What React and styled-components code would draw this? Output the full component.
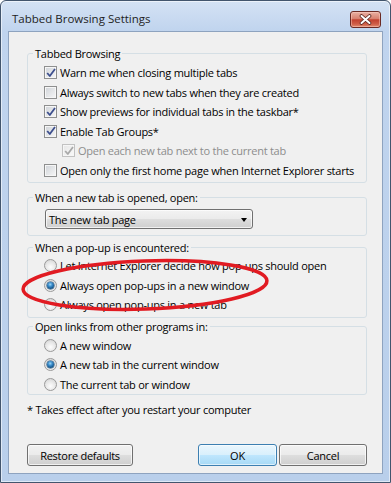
import React from 'react';
import styled, { createGlobalStyle } from 'styled-components';

const GlobalStyle = createGlobalStyle`
  html, body {
    margin: 0;
    padding: 0;
    background: #ffffff;
  }
  * {
    box-sizing: border-box;
  }
`;

const Window = styled.div`
  position: relative;
  width: 391px;
  height: 483px;
  display: flex;
  flex-direction: column;
  padding: 0 7px 8px 7px;
  border: 1px solid #42556d;
  border-radius: 6px 6px 0 0;
  background: linear-gradient(to bottom, #d4e2f4 0px, #c0d4ee 30px, #b9cfeb 100%);
  box-shadow: inset 0 0 0 1px rgba(255, 255, 255, 0.55);
  font-family: "Open Sans", "Noto Sans", sans-serif;
  font-size: 11px;
  letter-spacing: -0.25px;
  color: #000000;
`;

const TitleBar = styled.div`
  height: 30px;
  display: flex;
  justify-content: space-between;
  align-items: flex-start;
  flex: none;
`;

const Title = styled.div`
  padding: 10px 0 0 4px;
  font-size: 11.5px;
  letter-spacing: 0;
  line-height: 16px;
  color: #1e1e1e;
`;

const CloseButton = styled.div`
  width: 31px;
  height: 17px;
  margin: 10px 2px 0 0;
  display: flex;
  align-items: center;
  justify-content: center;
  border: 1px solid #6b2a24;
  border-radius: 3px;
  background: linear-gradient(to bottom, #e9b1a4 0%, #d8806f 45%, #c2412f 52%, #cf5d47 80%, #e18c70 100%);
  box-shadow: inset 0 0 0 1px rgba(255, 210, 200, 0.45);
`;

const Content = styled.div`
  flex: 1;
  display: flex;
  flex-direction: column;
  padding: 14px 15px 0 18px;
  border: 1px solid #8ea3bf;
  background: #f0f0f0;
`;

const Group = styled.fieldset`
  margin: ${(props) => props.$top || 0}px 0 0 0;
  padding: 0;
  border: 1px solid #d5dfe5;
  border-radius: 3px;
  min-width: 0;
`;

const Legend = styled.legend`
  margin-left: 5px;
  padding: 0 2px;
  line-height: 15px;
  color: #000000;
`;

const GroupBody = styled.div`
  padding: ${(props) => props.$pad || '2px 0 2px 16px'};
`;

const Row = styled.div`
  height: 19.5px;
  display: flex;
  align-items: center;
  gap: 3px;
  padding-left: ${(props) => props.$indent || 0}px;
  color: ${(props) => (props.$disabled ? '#8d8d8d' : '#000000')};
  white-space: nowrap;
`;

const CheckBox = styled.span`
  width: 13px;
  height: 13px;
  flex: none;
  display: flex;
  align-items: center;
  justify-content: center;
  border: 1px solid ${(props) => (props.$disabled ? '#c2c2c2' : '#8e8f8f')};
  background: ${(props) => (props.$disabled
    ? 'linear-gradient(135deg, #e6e6e6, #fafafa)'
    : 'linear-gradient(135deg, #cfd3d8, #f7f7f7)')};
  box-shadow: inset 0 0 0 1px #f6f6f6;
`;

const RadioOuter = styled.span`
  width: 13px;
  height: 13px;
  flex: none;
  display: flex;
  align-items: center;
  justify-content: center;
  border: 1px solid #9a9a9a;
  border-radius: 50%;
  background: radial-gradient(circle at 50% 65%, #fdfdfd 0%, #e6e6e6 55%, #cdcdcd 100%);
`;

const RadioDot = styled.span`
  width: 7px;
  height: 7px;
  border-radius: 50%;
  background: radial-gradient(circle at 45% 35%, #9ed8f6 0%, #3a8ccb 35%, #145487 70%, #0e3a66 100%);
  box-shadow: 0 0 0 0.5px #16466f;
`;

const Select = styled.div`
  width: 208px;
  height: 20px;
  display: flex;
  align-items: center;
  justify-content: space-between;
  padding: 0 5px 0 3px;
  border: 1px solid #707070;
  border-radius: 3px;
  background: linear-gradient(to bottom, #f3f3f3 0%, #ebebeb 48%, #dddddd 52%, #cfcfcf 100%);
  box-shadow: inset 0 0 0 1px rgba(255, 255, 255, 0.7);
`;

const Arrow = styled.span`
  width: 0;
  height: 0;
  border-left: 3.5px solid transparent;
  border-right: 3.5px solid transparent;
  border-top: 4px solid #000000;
  margin-top: 1px;
`;

const Note = styled.div`
  margin-top: 7px;
  line-height: 15px;
`;

const ButtonRow = styled.div`
  margin-top: 27px;
  display: flex;
  align-items: center;
  gap: 2px;
`;

const Button = styled.div`
  width: ${(props) => props.$width}px;
  height: 22px;
  margin-left: ${(props) => (props.$push ? 'auto' : '0')};
  display: flex;
  align-items: center;
  justify-content: center;
  border: 1px solid ${(props) => (props.$default ? '#3c7fb1' : '#707070')};
  border-radius: 3px;
  background: ${(props) => (props.$default
    ? 'linear-gradient(to bottom, #eaf6fd 0%, #d9f0fc 48%, #bee6fd 52%, #a7d9f5 100%)'
    : 'linear-gradient(to bottom, #f2f2f2 0%, #ebebeb 48%, #dddddd 52%, #cfcfcf 100%)')};
  box-shadow: inset 0 0 0 1px ${(props) => (props.$default ? 'rgba(255,255,255,0.6)' : 'rgba(255,255,255,0.7)')};
`;

const Annotation = styled.svg`
  position: absolute;
  left: 0;
  top: 0;
  pointer-events: none;
`;

const CheckMark = ({ disabled }) => (
  <svg width="10" height="10" viewBox="0 0 10 10">
    <path
      d="M1.2 5 L3.8 8 L9 1"
      fill="none"
      stroke={disabled ? '#a9a9a9' : '#3d4f8e'}
      strokeWidth="1.8"
      strokeLinejoin="round"
    />
  </svg>
);

const CheckRow = ({ checked, disabled, indent, children }) => (
  <Row $indent={indent} $disabled={disabled}>
    <CheckBox $disabled={disabled}>{checked && <CheckMark disabled={disabled} />}</CheckBox>
    {children}
  </Row>
);

const RadioRow = ({ selected, children }) => (
  <Row>
    <RadioOuter>{selected && <RadioDot />}</RadioOuter>
    {children}
  </Row>
);

const CloseIcon = () => (
  <svg width="13" height="11" viewBox="0 0 13 11">
    <path d="M2.5 2 L10.5 9 M10.5 2 L2.5 9" stroke="#5a2720" strokeWidth="3.6" strokeLinecap="round" />
    <path d="M2.5 2 L10.5 9 M10.5 2 L2.5 9" stroke="#ffffff" strokeWidth="2" strokeLinecap="round" />
  </svg>
);

const App = () => (
  <>
    <GlobalStyle />
    <Window>
      <TitleBar>
        <Title>Tabbed Browsing Settings</Title>
        <CloseButton>
          <CloseIcon />
        </CloseButton>
      </TitleBar>
      <Content>
        <Group>
          <Legend>Tabbed Browsing</Legend>
          <GroupBody>
            <CheckRow checked>Warn me when closing multiple tabs</CheckRow>
            <CheckRow>Always switch to new tabs when they are created</CheckRow>
            <CheckRow checked>Show previews for individual tabs in the taskbar*</CheckRow>
            <CheckRow checked>Enable Tab Groups*</CheckRow>
            <CheckRow checked disabled indent={18}>Open each new tab next to the current tab</CheckRow>
            <CheckRow>Open only the first home page when Internet Explorer starts</CheckRow>
          </GroupBody>
        </Group>

        <Group $top={7}>
          <Legend>When a new tab is opened, open:</Legend>
          <GroupBody $pad="4px 0 6px 17px">
            <Select>
              <span>The new tab page</span>
              <Arrow />
            </Select>
          </GroupBody>
        </Group>

        <Group $top={4}>
          <Legend>When a pop-up is encountered:</Legend>
          <GroupBody $pad="1px 0 2px 16px">
            <RadioRow>Let Internet Explorer decide how pop-ups should open</RadioRow>
            <RadioRow selected>Always open pop-ups in a new window</RadioRow>
            <RadioRow>Always open pop-ups in a new tab</RadioRow>
          </GroupBody>
        </Group>

        <Group $top={1}>
          <Legend>Open links from other programs in:</Legend>
          <GroupBody $pad="2px 0 0 16px">
            <RadioRow>A new window</RadioRow>
            <RadioRow selected>A new tab in the current window</RadioRow>
            <RadioRow>The current tab or window</RadioRow>
          </GroupBody>
        </Group>

        <Note>* Takes effect after you restart your computer</Note>

        <ButtonRow>
          <Button $width={106}>Restore defaults</Button>
          <Button $width={79} $push $default>OK</Button>
          <Button $width={88}>Cancel</Button>
        </ButtonRow>
      </Content>
      <Annotation width="391" height="483" viewBox="0 0 391 483">
        <ellipse
          cx="144"
          cy="284"
          rx="122"
          ry="24"
          transform="rotate(-2 144 284)"
          fill="none"
          stroke="#e11b22"
          strokeWidth="3.5"
        />
      </Annotation>
    </Window>
  </>
);

export default App;
